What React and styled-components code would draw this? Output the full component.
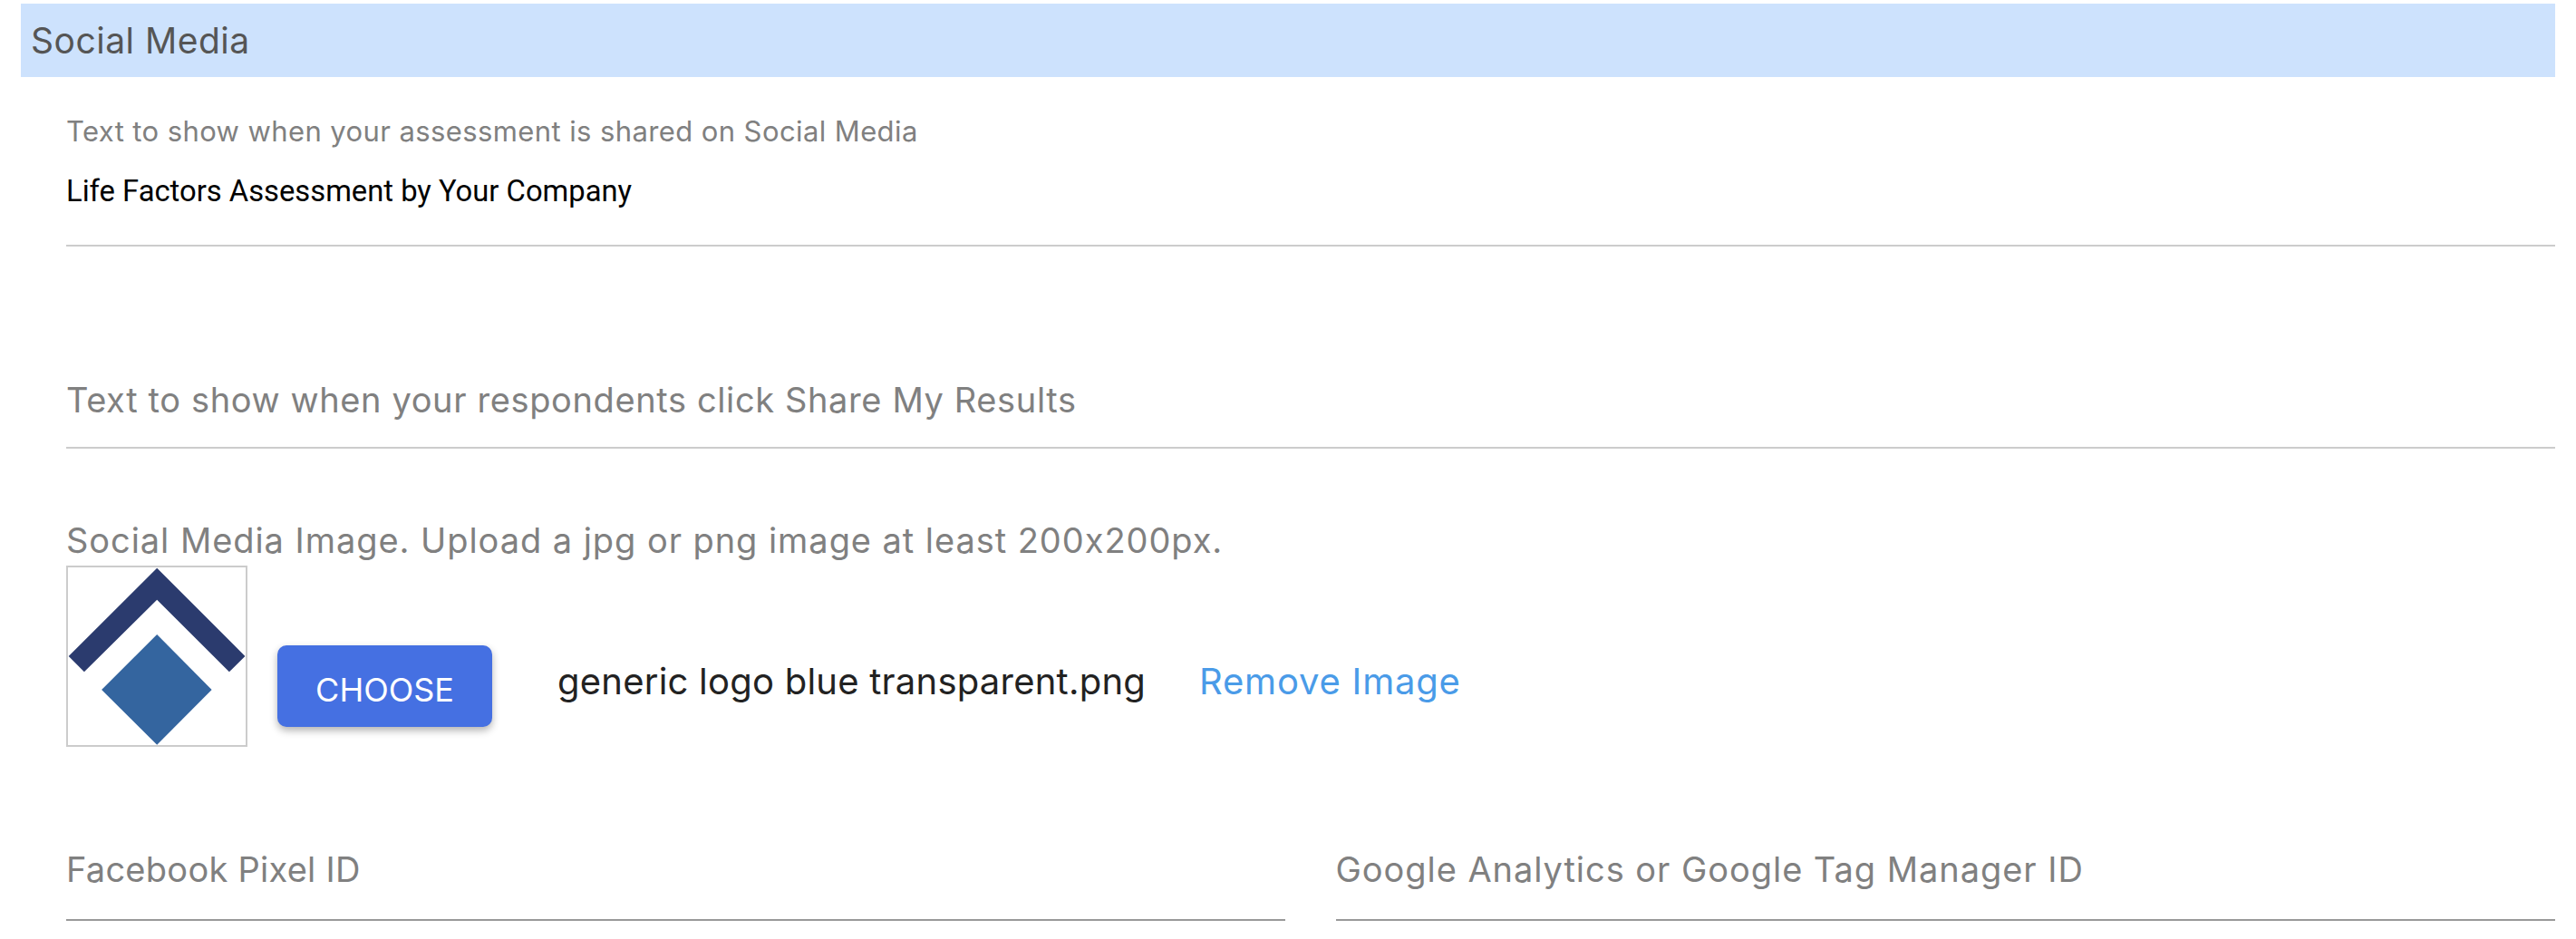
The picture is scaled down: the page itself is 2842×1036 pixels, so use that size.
import React from 'react'
import styled, { createGlobalStyle } from 'styled-components'

const GlobalStyle = createGlobalStyle`
    html, body {
        margin: 0;
        padding: 0;
        background: #fff;
        font-family: "Inter", "Liberation Sans", sans-serif;
        font-feature-settings: "calt" 0;
    }
`

function App() {
    return (
        <Page>
            <GlobalStyle />
            <SectionBar>Social Media</SectionBar>
            <Form>
                <ShareField>
                    <SmallLabel>Text to show when your assessment is shared on Social Media</SmallLabel>
                    <Value>Life Factors Assessment by Your Company</Value>
                </ShareField>

                <ResultsField>
                    <Label $tracking="0.62px">Text to show when your respondents click Share My Results</Label>
                </ResultsField>

                <ImageLabel $tracking="0.94px">Social Media Image. Upload a jpg or png image at least 200x200px.</ImageLabel>
                <UploadRow>
                    <Thumb>
                        <svg width="196" height="196" viewBox="0 0 196 196">
                            <polygon points="98.2,0.7 0.7,98 17.9,115.3 98.2,35.7 177.9,115.3 195.4,98" fill="#2b3b6e" />
                            <polygon points="98.2,74 37.1,135 98.2,195.7 158.6,135" fill="#34659f" />
                        </svg>
                    </Thumb>
                    <ChooseButton>CHOOSE</ChooseButton>
                    <FileName>generic logo blue transparent.png</FileName>
                    <RemoveLink>Remove Image</RemoveLink>
                </UploadRow>

                <TrackingRow>
                    <TrackingField>
                        <Label $tracking="0.27px">Facebook Pixel ID</Label>
                    </TrackingField>
                    <TrackingField>
                        <Label $tracking="0.95px">Google Analytics or Google Tag Manager ID</Label>
                    </TrackingField>
                </TrackingRow>
            </Form>
        </Page>
    )
}

const Page = styled.div`
    padding: 4px 23px 0;
    height: 1032px;
    overflow: hidden;
`

const SectionBar = styled.div`
    height: 81px;
    line-height: 81px;
    padding-left: 11px;
    background-color: #cde2fd;
    color: #555;
    font-size: 39px;
    letter-spacing: 0.5px;
`

const Form = styled.div`
    padding-left: 50px;
`

const ShareField = styled.div`
    padding: 40px 0 39px;
    border-bottom: 2px solid #ccc;
`

const SmallLabel = styled.div`
    line-height: 40px;
    font-size: 31px;
    letter-spacing: 0.4px;
    color: #808080;
`

const Value = styled.div`
    margin-top: 26px;
    line-height: 40px;
    font-family: "Roboto", sans-serif;
    font-size: 32.75px;
    color: #000;
`

const Label = styled.div`
    line-height: 40px;
    font-size: 38px;
    letter-spacing: ${props => props.$tracking || 0};
    color: #808080;
`

const ResultsField = styled.div`
    margin-top: 149px;
    padding-bottom: 32px;
    border-bottom: 2px solid #ccc;
`

const ImageLabel = styled(Label)`
    margin: 81px 0 8px;
`

const UploadRow = styled.div`
    display: flex;
    align-items: flex-start;
    height: 200px;
`

const Thumb = styled.div`
    width: 196px;
    height: 196px;
    border: 2px solid #ccc;
    flex-shrink: 0;

    svg {
        display: block;
    }
`

const ChooseButton = styled.button`
    width: 237px;
    height: 90px;
    margin: 88px 72px 0 33px;
    padding: 8px 0 0;
    border: none;
    border-radius: 10px;
    background-color: #4570e2;
    box-shadow: 0 4px 8px rgba(0, 0, 0, 0.3);
    color: #fff;
    font-family: inherit;
    font-size: 36px;
`

const FileName = styled.span`
    margin: 108px 59px 0 0;
    line-height: 40px;
    font-size: 40px;
    letter-spacing: 0.23px;
    color: #222;
`

const RemoveLink = styled.a`
    margin-top: 108px;
    line-height: 40px;
    font-size: 40px;
    letter-spacing: 0.8px;
    color: #4a9be8;
`

const TrackingRow = styled.div`
    display: grid;
    grid-template-columns: 1344.5px 1345px;
    column-gap: 56px;
    margin-top: 115px;
`

const TrackingField = styled.div`
    padding-bottom: 35px;
    border-bottom: 2px solid #999;
`

export default App
